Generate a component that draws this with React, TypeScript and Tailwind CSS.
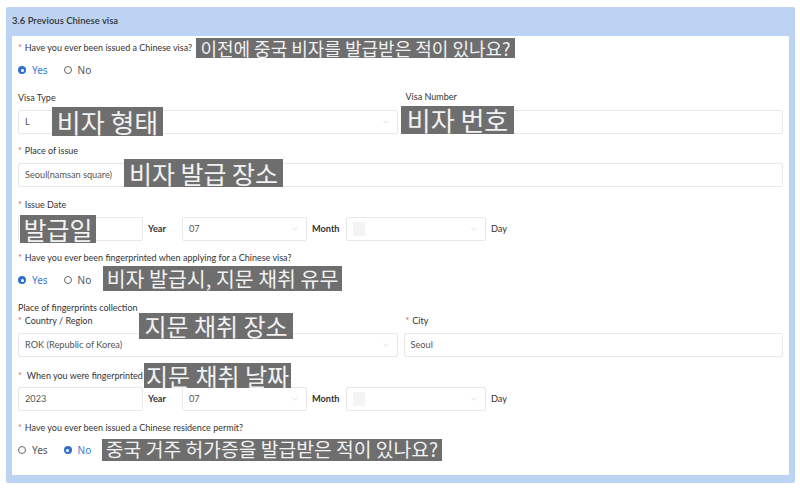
import React from 'react';
import { ChevronDown } from 'lucide-react';

const Req: React.FC = () => <span className="text-[#e25c5c] mr-[3px]">*</span>;

const Radio: React.FC<{ label: string; checked?: boolean }> = ({ label, checked }) => (
    <div className="flex items-center gap-[6px]">
        {checked ? (
            <span className="w-[8px] h-[8px] rounded-full bg-[#2f6fd0] flex items-center justify-center">
                <span className="w-[3px] h-[3px] rounded-full bg-white"></span>
            </span>
        ) : (
            <span className="w-[8px] h-[8px] rounded-full border border-[#666] bg-white"></span>
        )}
        <span className={`text-[10px] ${checked ? 'text-[#3a7bd5]' : 'text-[#555]'}`} style={{ fontFamily: '"Noto Sans", sans-serif' }}>{label}</span>
    </div>
);

const RadioRow: React.FC<{ yes: boolean; className?: string }> = ({ yes, className }) => (
    <div className={`flex items-center gap-[16px] h-[14px] ${className ?? ''}`}>
        <Radio label="Yes" checked={yes} />
        <Radio label="No" checked={!yes} />
    </div>
);

const Box: React.FC<{ children?: React.ReactNode; className?: string }> = ({ children, className }) => (
    <div className={`h-[24px] bg-white border border-[#e8e8e8] rounded-[2px] flex items-center px-[6px] text-[9.2px] text-[#555] ${className ?? ''}`}>
        {children}
    </div>
);

const Select: React.FC<{ value?: React.ReactNode; className?: string }> = ({ value, className }) => (
    <Box className={`justify-between ${className ?? ''}`}>
        <span>{value}</span>
        <ChevronDown size={10} strokeWidth={1.2} className="text-[#c4c4c4]" />
    </Box>
);

const DateRow: React.FC<{ year: string; className?: string }> = ({ year, className }) => (
    <div className={`flex items-center ${className ?? ''}`}>
        <Box className="w-[125px]">{year}</Box>
        <span className="w-[39px] pl-[5px] font-bold text-[9.2px] text-[#333]">Year</span>
        <Select className="w-[125px]" value="07" />
        <span className="w-[39px] pl-[5px] font-bold text-[9.2px] text-[#333]">Month</span>
        <Select className="w-[140px]" value={<span className="block w-[12px] h-[14px] bg-[#f4f4f4]"></span>} />
        <span className="pl-[5px] text-[9.2px] text-[#333]">Day</span>
    </div>
);

const Label: React.FC<{ children: React.ReactNode; className?: string }> = ({ children, className }) => (
    <div className={`flex items-center text-[9px] text-[#333] ${className ?? 'h-[14px]'}`}>{children}</div>
);

const Note: React.FC<{ text: string; className: string }> = ({ text, className }) => (
    <div
        className={`absolute flex items-center justify-center bg-[#6e6e6e] text-[#f2f2f2] leading-none whitespace-nowrap ${className}`}
        style={{ fontFamily: '"Noto Sans CJK KR", sans-serif' }}
    >
        {text}
    </div>
);

export default function App() {
    return (
        <div className="relative w-[800px] h-[490px] bg-white" style={{ fontFamily: 'Lato, "Noto Sans", sans-serif' }}>
            <div className="absolute left-[6px] top-[7px] w-[789px] h-[476px] bg-[#bdd3f4] rounded-[2px] flex flex-col">
                <div className="h-[29px] flex items-center pl-[6px] text-[9.5px] font-semibold text-[#333]">3.6 Previous Chinese visa</div>
                <div className="mx-[6px] mb-[8px] flex-1 bg-white px-[6px] pt-[5px]">
                    <Label><Req />Have you ever been issued a Chinese visa?</Label>
                    <RadioRow yes className="mt-[8px]" />

                    <div className="grid grid-cols-2 gap-[6px] mt-[14px]">
                        <div>
                            <Label>Visa Type</Label>
                            <Select className="mt-[5px]" value="L" />
                        </div>
                        <div>
                            <Label className="h-[12px] pl-[2px]">Visa Number</Label>
                            <Box className="mt-[7px]" />
                        </div>
                    </div>

                    <Label className="h-[14px] mt-[10px]"><Req />Place of issue</Label>
                    <Box className="mt-[5px]">Seoul(namsan square)</Box>

                    <Label className="h-[14px] mt-[11px]"><Req />Issue Date</Label>
                    <DateRow year="2023" className="mt-[5px]" />

                    <Label className="h-[14px] mt-[10px]"><Req />Have you ever been fingerprinted when applying for a Chinese visa?</Label>
                    <RadioRow yes className="mt-[8px]" />

                    <Label className="h-[13px] mt-[14px]">Place of fingerprints collection</Label>
                    <div className="grid grid-cols-2 gap-[6px]">
                        <div>
                            <Label className="h-[13px]"><Req />Country / Region</Label>
                            <Select className="mt-[6px]" value="ROK (Republic of Korea)" />
                        </div>
                        <div>
                            <Label className="h-[13px] pl-[2px]"><Req />City</Label>
                            <Box className="mt-[6px]">Seoul</Box>
                        </div>
                    </div>

                    <Label className="h-[14px] mt-[12px]"><span className="text-[#e25c5c] mr-[5px]">*</span>When you were fingerprinted</Label>
                    <DateRow year="2023" className="mt-[4px]" />

                    <Label className="h-[14px] mt-[10px]"><Req />Have you ever been issued a Chinese residence permit?</Label>
                    <RadioRow yes={false} className="mt-[8px]" />
                </div>
            </div>

            <Note text="이전에 중국 비자를 발급받은 적이 있나요?" className="left-[196px] top-[38px] w-[319px] h-[20px] text-[18px]" />
            <Note text="비자 형태" className="left-[52px] top-[107px] w-[111px] h-[29px] text-[26px]" />
            <Note text="비자 번호" className="left-[401px] top-[106px] w-[113px] h-[28px] text-[26px]" />
            <Note text="비자 발급 장소" className="left-[124px] top-[159px] w-[159px] h-[28px] text-[25px]" />
            <Note text="발급일" className="left-[20px] top-[215px] w-[76px] h-[28px] text-[25px]" />
            <Note text="비자 발급시, 지문 채취 유무" className="left-[103px] top-[266px] w-[239px] h-[25px] text-[20.5px]" />
            <Note text="지문 채취 장소" className="left-[139px] top-[313px] w-[154px] h-[26px] text-[24px]" />
            <Note text="지문 채취 날짜" className="left-[144px] top-[363px] w-[147px] h-[25px] text-[24px]" />
            <Note text="중국 거주 허가증을 발급받은 적이 있나요?" className="left-[102px] top-[439px] w-[340px] h-[22px] text-[19.3px]" />
        </div>
    );
}
